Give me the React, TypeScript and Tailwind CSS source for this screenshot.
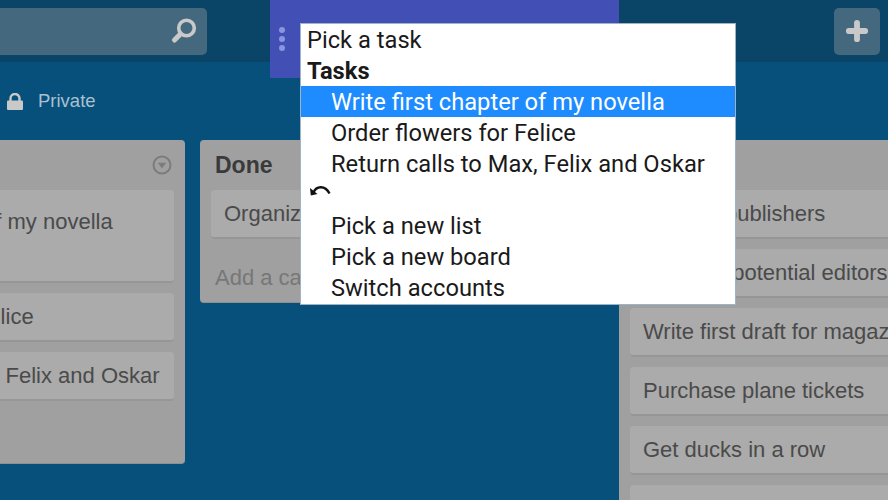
import React from 'react';
import { Plus } from 'lucide-react';

const arial = { fontFamily: '"Liberation Sans", Arial, sans-serif' };

const Card = ({ text, tall }: { text: string; tall?: boolean }) => (
  <div
    className={`${tall ? 'h-[93px] pt-[19px]' : 'h-[49px] pt-[11px]'} shrink-0 rounded-[4px] bg-[#ababab] border-b-2 border-[#969696] px-[13px] text-[22px] leading-[26px] text-[#4a4a4a] whitespace-nowrap overflow-hidden`}
  >
    {text}
  </div>
);

const List = ({ title, cards, height, footer, menu }: { title: string; cards: { text: string; tall?: boolean }[]; height: string; footer?: string; menu?: boolean }) => (
  <div className={`${height} w-[404px] shrink-0 rounded-[4px] bg-[#a0a0a0] border-b border-[#8f8f8f] px-[11px] overflow-hidden`}>
    <div className="h-[50px] flex items-center justify-between pl-[4px] pr-[2px]">
      <span className="text-[23px] font-bold text-[#3a3a3a]">{title}</span>
      {menu && (
        <svg width="20" height="20" viewBox="0 0 20 20">
          <circle cx="10" cy="10" r="8.5" fill="none" stroke="#7c7c7c" strokeWidth="2" />
          <path d="M5.8 7.8h8.4L10 13.6z" fill="#7c7c7c" />
        </svg>
      )}
    </div>
    <div className="flex flex-col gap-[10px]">
      {cards.map((c) => (
        <Card key={c.text} text={c.text} tall={c.tall} />
      ))}
    </div>
    {footer && <div className="pt-[26px] pl-[4px] text-[22px] leading-[26px] text-[#777777]">{footer}</div>}
  </div>
);

const MenuRow = ({ text, active, bold, indent }: { text: string; active?: boolean; bold?: boolean; indent?: boolean }) => (
  <div
    className={`h-[31px] flex items-center pt-[2px] whitespace-nowrap text-[23.7px] ${indent ? 'pl-[30px]' : 'pl-[6px]'} ${active ? 'bg-[#1e8bff] text-white' : 'text-[#1a1a1a]'} ${bold ? 'font-bold' : ''}`}
  >
    {text}
  </div>
);

export default function App() {
  return (
    <div className="relative w-[888px] h-[500px] overflow-hidden bg-[#07507c]" style={arial}>
      <div className="h-[62px] bg-[#0a4568] flex items-center justify-between pr-[8px]">
        <div className="w-[247px] h-[47px] -ml-[40px] rounded-[5px] bg-[#44697f] flex items-center justify-end pr-[9px]">
          <svg width="28" height="28" viewBox="0 0 28 28">
            <circle cx="16.5" cy="11" r="7.8" fill="none" stroke="#c9c9c9" strokeWidth="3.6" />
            <path d="M10.5 17 L4.5 23" stroke="#c9c9c9" strokeWidth="5" strokeLinecap="round" />
          </svg>
        </div>
        <div className="w-[46px] h-[47px] rounded-[5px] bg-[#44697f] flex items-center justify-center">
          <Plus size={28} strokeWidth={5} color="#c9c9c9" />
        </div>
      </div>

      <div className="h-[78px] flex items-center pl-[7px]">
        <svg width="16" height="17" viewBox="0 0 16 17">
          <path d="M3.5 8V5.5a4.5 4.5 0 0 1 9 0V8" fill="none" stroke="#c9c9c9" strokeWidth="2.4" />
          <rect x="0" y="7.5" width="16" height="9.5" rx="1" fill="#c9c9c9" />
        </svg>
        <span className="ml-[15px] text-[18.5px] font-medium text-[#a9c0cf]">Private</span>
      </div>

      <div className="flex gap-[15px] -ml-[219px] items-start">
        <List
          title="Doing"
          height="h-[324px]"
          menu
          cards={[
            { text: 'Write first chapter of my novella', tall: true },
            { text: 'Order flowers for Felice' },
            { text: 'Return calls to Max, Felix and Oskar' },
          ]}
        />
        <List title="Done" height="h-[163px]" cards={[{ text: 'Organize files' }]} footer="Add a card..." />
        <List
          title="To Do"
          height="h-[420px]"
          cards={[
            { text: 'Contact publishers' },
            { text: 'Email all potential editors' },
            { text: 'Write first draft for magazine' },
            { text: 'Purchase plane tickets' },
            { text: 'Get ducks in a row' },
            { text: 'Pack bags' },
          ]}
        />
      </div>

      {/* purple launcher behind the dropdown */}
      <div className="absolute left-[270px] top-0 w-[349px] h-[78px] bg-[#4250b5]">
        <div className="absolute left-[9px] top-[27px] flex flex-col gap-[3px]">
          <span className="w-[6px] h-[6px] rounded-full bg-[#8a95dd]" />
          <span className="w-[6px] h-[6px] rounded-full bg-[#8a95dd]" />
          <span className="w-[6px] h-[6px] rounded-full bg-[#8a95dd]" />
        </div>
      </div>

      <div
        className="absolute left-[300px] top-[23px] w-[436px] h-[282px] bg-white border border-[#9db4c6] overflow-hidden"
        style={{ fontFamily: 'Roboto, sans-serif' }}
      >
        <MenuRow text="Pick a task" />
        <MenuRow text="Tasks" bold />
        <MenuRow text="Write first chapter of my novella" active indent />
        <MenuRow text="Order flowers for Felice" indent />
        <MenuRow text="Return calls to Max, Felix and Oskar" indent />
        <div className="h-[31px] flex items-start pl-[9px] pt-[5px]">
          <svg width="21" height="13" viewBox="0 0 21 13">
            <path d="M3.5 8.5C6 2 15 0.5 19.5 9.5" fill="none" stroke="#111" strokeWidth="2.4" />
            <path d="M0 4 L7.5 10 L0.8 11.5z" fill="#111" />
          </svg>
        </div>
        <MenuRow text="Pick a new list" indent />
        <MenuRow text="Pick a new board" indent />
        <MenuRow text="Switch accounts" indent />
      </div>
    </div>
  );
}
